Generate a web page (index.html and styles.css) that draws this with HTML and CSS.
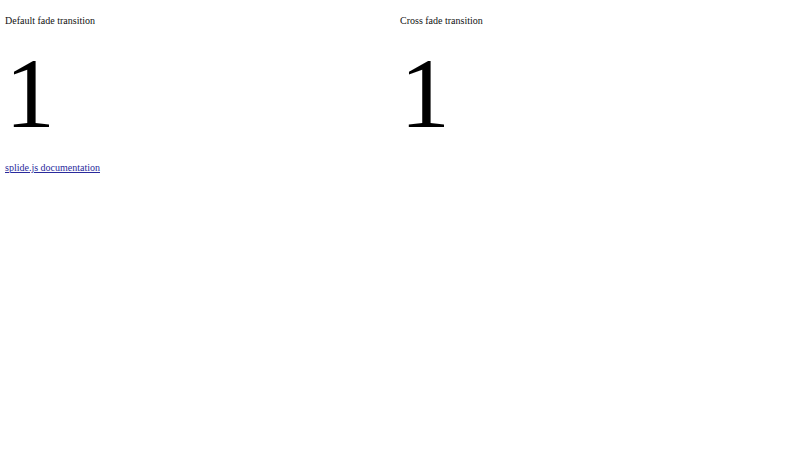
FILE: index.html
```html
<!DOCTYPE html>
<html lang="en">
<head>
<meta charset="utf-8">
<title>Splide fade transitions</title>
<link rel="stylesheet" href="styles.css">
</head>
<body>
  <main class="page">
    <div class="demos">
      <section class="demo">
        <p class="demo-title">Default fade transition</p>
        <div class="slide">1</div>
      </section>
      <section class="demo">
        <p class="demo-title">Cross fade transition</p>
        <div class="slide">1</div>
      </section>
    </div>
    <a class="docs-link" href="#">splide.js documentation</a>
  </main>
</body>
</html>
```
FILE: styles.css
```css
html, body {
  margin: 0;
  background: #fff;
}

.page {
  padding: 5px;
  font-family: "Liberation Serif", "Times New Roman", serif;
  font-size: 10px;
  color: #111;
}

.demos {
  display: grid;
  grid-template-columns: 1fr 1fr;
}

.demo-title {
  margin: 10px 0 0;
  line-height: 12px;
}

.slide {
  font-size: 100px;
  line-height: 115px;
  margin-top: 9px;
  color: #000;
}

.docs-link {
  display: inline-block;
  margin-top: 11px;
  line-height: 12px;
  color: #2a2a9c;
}
```
